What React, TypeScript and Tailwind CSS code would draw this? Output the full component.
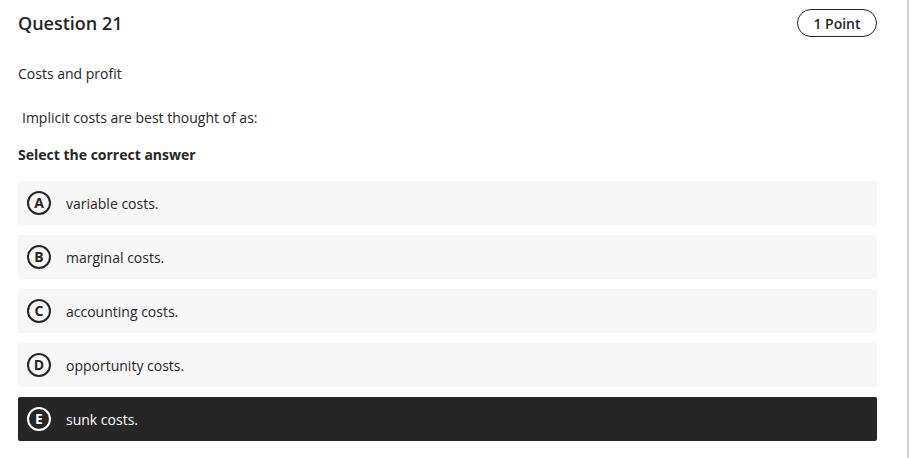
const options = [
  { letter: "A", text: "variable costs." },
  { letter: "B", text: "marginal costs." },
  { letter: "C", text: "accounting costs." },
  { letter: "D", text: "opportunity costs." },
  { letter: "E", text: "sunk costs.", selected: true },
];

export default function App() {
  return (
    <div
      className="flex h-[458px] w-[921px] bg-white text-[#262626]"
      style={{ fontFamily: '"Open Sans", sans-serif' }}
    >
      <div className="w-[907px] pl-[18px] pr-[30px]">
        <div className="flex h-[46px] items-center justify-between">
          <h1 className="text-[18px] font-semibold">Question 21</h1>
          <span className="flex h-[28px] w-[80px] items-center justify-center rounded-full border border-[#262626] text-[14px] font-semibold">
            1 Point
          </span>
        </div>

        <p className="mt-[18px] text-[14px] leading-[20px]">Costs and profit</p>
        <p className="mt-[24px] pl-[4px] text-[14px] leading-[20px]">Implicit costs are best thought of as:</p>
        <p className="mt-[17px] text-[14px] font-bold leading-[20px]">Select the correct answer</p>

        <div className="mt-[16px] flex flex-col gap-[10px]">
          {options.map(o => (
            <div
              key={o.letter}
              className={`flex h-[44px] items-center rounded-[2px] pl-[9px] ${
                o.selected ? "bg-[#262626] text-white" : "bg-[#f7f7f7]"
              }`}
            >
              <div
                className={`flex h-[24px] w-[24px] shrink-0 items-center justify-center rounded-full border-2 text-[14px] font-bold leading-none ${
                  o.selected ? "border-white" : "border-[#262626]"
                }`}
              >
                {o.letter}
              </div>
              <span className="ml-[15px] text-[14px]">{o.text}</span>
            </div>
          ))}
        </div>
      </div>
      <div className="h-full w-[2px] bg-[#cfcfcf]" />
    </div>
  );
}
